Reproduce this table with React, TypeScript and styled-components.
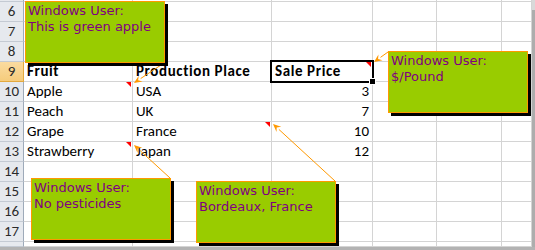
import React from 'react';
import styled, { createGlobalStyle, css } from 'styled-components';

const Global = createGlobalStyle`
  html, body { margin: 0; padding: 0; background: #fff; overflow: hidden; }
  #root { width: 535px; height: 250px; }
`;

const CELL_FONT = `Carlito, Lato, "Liberation Sans", sans-serif`;

const Sheet = styled.div`
  position: relative;
  width: 535px;
  height: 250px;
  display: grid;
  grid-template-columns: 532px 3px;
  grid-template-rows: 247px 3px;
  overflow: hidden;
  font-family: ${CELL_FONT};
`;

const Grid = styled.div`
  display: grid;
  grid-template-columns: 24px 109px 139px 101px 64px 65px 30px;
  grid-template-rows: 2px repeat(12, 20px) 5px;
  background: #fff;
`;

const RowHead = styled.div<{ $active?: boolean }>`
  box-sizing: border-box;
  border-right: 1px solid #9eaab9;
  border-bottom: 1px solid #c4cad3;
  background: ${(p) => (p.$active ? 'linear-gradient(#fadba0, #f6cc7c)' : '#e6e9ee')};
  ${(p) => p.$active && css`border-bottom-color: #e3a93e; border-right-color: #e3a93e;`}
  color: #2b2b2b;
  font-size: 15px;
  display: flex;
  align-items: flex-end;
  justify-content: center;
  padding-bottom: 1px;
  line-height: 17px;
  overflow: hidden;
`;

const Cell = styled.div<{ $bold?: boolean; $right?: boolean; $comment?: boolean }>`
  position: relative;
  box-sizing: border-box;
  border-right: 1px solid #d4d4d4;
  border-bottom: 1px solid #d4d4d4;
  color: #000;
  font-size: 15px;
  font-weight: ${(p) => (p.$bold ? 700 : 400)};
  letter-spacing: ${(p) => (p.$bold ? '0.6px' : '0')};
  display: flex;
  align-items: flex-end;
  justify-content: ${(p) => (p.$right ? 'flex-end' : 'flex-start')};
  padding: 0 3px 1px 3px;
  line-height: 17px;
  white-space: nowrap;
  ${(p) =>
    p.$comment &&
    css`
      &::after {
        content: '';
        position: absolute;
        top: 0;
        right: 1px;
        width: 0;
        height: 0;
        border-top: 5px solid #ff0000;
        border-left: 5px solid transparent;
        z-index: 3;
      }
    `}
`;

const Selection = styled.div`
  position: absolute;
  top: -2px;
  left: -2px;
  right: -2px;
  bottom: -2px;
  border: 2px solid #000;
  pointer-events: none;
  z-index: 2;
`;

const FillHandle = styled.div`
  position: absolute;
  right: -4px;
  bottom: -4px;
  width: 5px;
  height: 5px;
  background: #000;
  border: 1px solid #fff;
`;

const VScroll = styled.div`
  background: linear-gradient(#d9d9d9 0, #d9d9d9 10px, #adadad 10px);
`;

const HScroll = styled.div`
  grid-column: 1 / span 2;
  background: #b3b3b3;
`;

const Comment = styled.div<{ $x: number; $y: number }>`
  position: absolute;
  left: ${(p) => p.$x}px;
  top: ${(p) => p.$y}px;
  width: 140px;
  height: 62px;
  box-sizing: border-box;
  background: #99cc00;
  border: 1px solid #ff9900;
  box-shadow: 3px 3px 0 #000;
  padding: 1px 2px;
  color: #800080;
  font-family: "DejaVu Sans", Verdana, sans-serif;
  font-size: 13px;
  line-height: 16px;
  z-index: 5;
  white-space: nowrap;
`;

const Arrows = styled.svg`
  position: absolute;
  left: 0;
  top: 0;
  width: 535px;
  height: 250px;
  z-index: 4;
  pointer-events: none;
`;

type CellDef = { text?: string; bold?: boolean; right?: boolean; comment?: boolean; selected?: boolean };

const rows: { label: string; cells: CellDef[]; active?: boolean }[] = [
  { label: '', cells: [] },
  { label: '6', cells: [] },
  { label: '7', cells: [] },
  { label: '8', cells: [] },
  {
    label: '9',
    active: true,
    cells: [
      { text: 'Fruit', bold: true },
      { text: 'Production Place', bold: true },
      { text: 'Sale Price', bold: true, selected: true, comment: true },
    ],
  },
  { label: '10', cells: [{ text: 'Apple', comment: true }, { text: 'USA' }, { text: '3', right: true }] },
  { label: '11', cells: [{ text: 'Peach' }, { text: 'UK' }, { text: '7', right: true }] },
  { label: '12', cells: [{ text: 'Grape' }, { text: 'France', comment: true }, { text: '10', right: true }] },
  { label: '13', cells: [{ text: 'Strawberry', comment: true }, { text: 'Japan' }, { text: '12', right: true }] },
  { label: '14', cells: [] },
  { label: '15', cells: [] },
  { label: '16', cells: [] },
  { label: '17', cells: [] },
  { label: '', cells: [] },
];

const comments = [
  { x: 25, y: 1, lines: ['Windows User:', 'This is green apple'] },
  { x: 388, y: 51, lines: ['Windows User:', '$/Pound'] },
  { x: 31, y: 178, lines: ['Windows User:', 'No pesticides'] },
  { x: 196, y: 181, lines: ['Windows User:', 'Bordeaux, France'] },
];

const arrowDefs = [
  [164, 63, 134, 83],
  [388, 52, 374, 62],
  [170, 178, 134, 145],
  [335, 181, 273, 124],
];

function Arrow({ x1, y1, x2, y2 }: { x1: number; y1: number; x2: number; y2: number }) {
  const dx = x2 - x1;
  const dy = y2 - y1;
  const L = Math.hypot(dx, dy);
  const ux = dx / L;
  const uy = dy / L;
  const len = 8;
  const hw = 3.5;
  const bx = x2 - ux * len;
  const by = y2 - uy * len;
  const px = -uy;
  const py = ux;
  const pts = `${x2},${y2} ${bx + px * hw},${by + py * hw} ${x2 - ux * 5},${y2 - uy * 5} ${bx - px * hw},${by - py * hw}`;
  return (
    <g>
      <line x1={x1} y1={y1} x2={bx} y2={by} stroke="#ff9900" strokeWidth={1} />
      <polygon points={pts} fill="#ff9900" />
    </g>
  );
}

export default function App() {
  return (
    <>
      <Global />
      <Sheet>
        <Grid>
          {rows.map((r, ri) => (
            <React.Fragment key={ri}>
              <RowHead $active={r.active}>{r.label}</RowHead>
              {Array.from({ length: 6 }).map((_, ci) => {
                const c = r.cells[ci] || {};
                return (
                  <Cell key={ci} $bold={c.bold} $right={c.right} $comment={c.comment}>
                    {c.text}
                    {c.selected && (
                      <Selection>
                        <FillHandle />
                      </Selection>
                    )}
                  </Cell>
                );
              })}
            </React.Fragment>
          ))}
        </Grid>
        <VScroll />
        <HScroll />
        <Arrows viewBox="0 0 535 250">
          {arrowDefs.map(([x1, y1, x2, y2], i) => (
            <Arrow key={i} x1={x1} y1={y1} x2={x2} y2={y2} />
          ))}
        </Arrows>
        {comments.map((c, i) => (
          <Comment key={i} $x={c.x} $y={c.y}>
            {c.lines.map((l, j) => (
              <div key={j}>{l}</div>
            ))}
          </Comment>
        ))}
      </Sheet>
    </>
  );
}
